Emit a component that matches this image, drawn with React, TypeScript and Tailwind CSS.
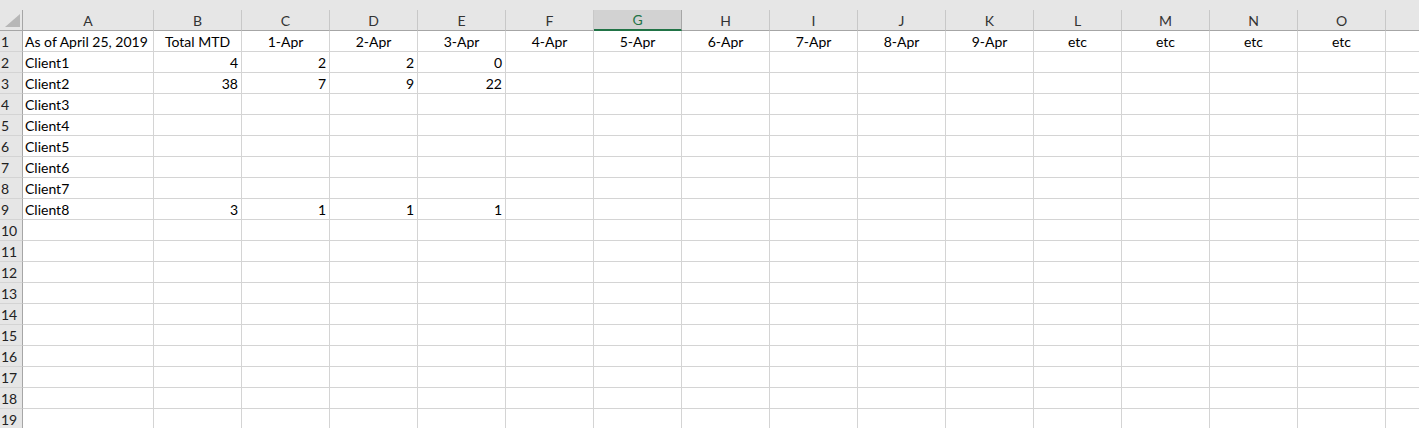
import React from "react";

const cols = ["A", "B", "C", "D", "E", "F", "G", "H", "I", "J", "K", "L", "M", "N", "O"];

type Cell = { v: string; align?: "l" | "r" | "c" };

const header: Cell[] = [
  { v: "As of April 25, 2019", align: "l" },
  { v: "Total MTD", align: "c" },
  ...["1-Apr", "2-Apr", "3-Apr", "4-Apr", "5-Apr", "6-Apr", "7-Apr", "8-Apr", "9-Apr", "etc", "etc", "etc", "etc"].map(
    (v) => ({ v, align: "c" as const })
  ),
];

const data: (string | number)[][] = [
  ["Client1", 4, 2, 2, 0],
  ["Client2", 38, 7, 9, 22],
  ["Client3"],
  ["Client4"],
  ["Client5"],
  ["Client6"],
  ["Client7"],
  ["Client8", 3, 1, 1, 1],
];

function rowCells(r: number): Cell[] {
  if (r === 1) return header;
  const d = data[r - 2];
  if (!d) return [];
  return d.map((v, i) => ({ v: String(v), align: i === 0 ? "l" : "r" }));
}

const alignCls = { l: "justify-start pl-[2px]", r: "justify-end pr-[3px]", c: "justify-center" };

export default function App() {
  const rows = Array.from({ length: 19 }, (_, i) => i + 1);
  return (
    <div
      className="w-[1419px] h-[428px] overflow-hidden bg-white text-[14px] text-black"
      style={{ fontFamily: "Lato, 'Open Sans', sans-serif" }}
    >
      <div className="h-[10px] bg-[#e6e6e6]" />
      <div className="grid grid-cols-[23px_131px_repeat(14,88px)_1fr]">
        {/* column header row */}
        <div className="relative h-[21px] bg-[#e6e6e6] border-r border-b border-[#a6a6a6]">
          <svg className="absolute left-[5px] top-[4px]" width="15" height="13" viewBox="0 0 15 13">
            <polygon points="15,0 15,13 0,13" fill="#b7b7b7" />
          </svg>
        </div>
        {cols.map((c) =>
          c === "G" ? (
            <div
              key={c}
              className="h-[21px] bg-[#d2d2d2] border-r border-[#a6a6a6] border-b-2 border-b-[#217346] flex items-center justify-center text-[#217346]"
            >
              {c}
            </div>
          ) : (
            <div
              key={c}
              className="h-[21px] bg-[#e6e6e6] border-r border-b border-r-[#c8c8c8] border-b-[#a6a6a6] flex items-center justify-center text-[#333]"
            >
              {c}
            </div>
          )
        )}
        <div className="h-[21px] bg-[#e6e6e6] border-b border-[#a6a6a6]" />

        {rows.map((r) => {
          const cells = rowCells(r);
          return (
            <React.Fragment key={r}>
              <div className="h-[21px] bg-[#e6e6e6] border-r border-[#a6a6a6] border-b border-b-[#d4d4d4] flex items-center pl-[1px] text-[#222]">
                {r}
              </div>
              {cols.map((c, i) => {
                const cell = cells[i];
                return (
                  <div
                    key={c}
                    className={`h-[21px] border-r border-b border-[#d4d4d4] flex items-center whitespace-nowrap overflow-hidden ${
                      cell ? alignCls[cell.align ?? "l"] : ""
                    }`}
                  >
                    {cell?.v}
                  </div>
                );
              })}
              <div className="h-[21px] border-b border-[#d4d4d4]" />
            </React.Fragment>
          );
        })}
      </div>
    </div>
  );
}
